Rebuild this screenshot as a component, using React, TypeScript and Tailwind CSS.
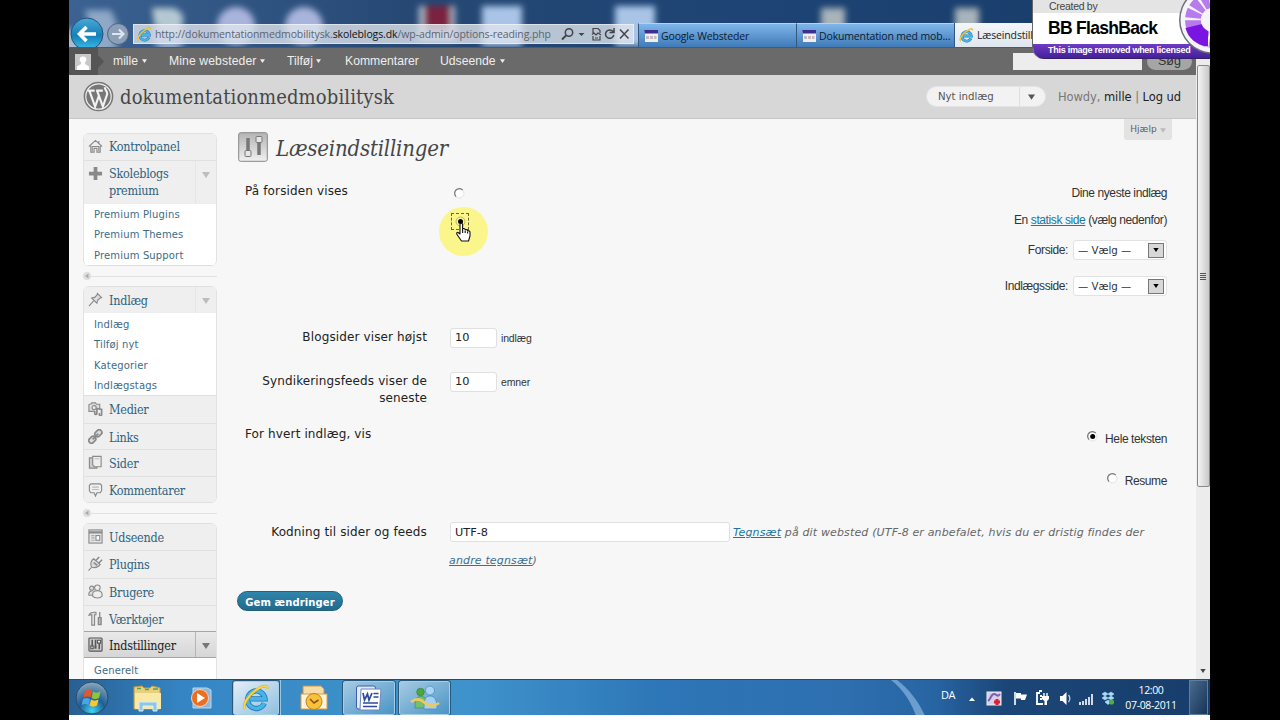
import type { ReactNode } from 'react'
import clsx from 'clsx'

const SERIF = "font-['DejaVu_Serif_Condensed','DejaVu_Serif',serif]"
const VERDANA = "font-['DejaVu_Sans',sans-serif]"
const ARIAL = "font-['Liberation_Sans',sans-serif]"
const SEGOE = "font-['Open_Sans','Noto_Sans',sans-serif]"

type IconName =
  | 'home' | 'plus' | 'pin' | 'media' | 'link' | 'pages' | 'comment'
  | 'appearance' | 'plug' | 'users' | 'tools' | 'settings'

const ICONS: Record<IconName, ReactNode> = {
  home: (
    <>
      <path d="M1 8 8 1.5 15 8M3 7.5V14h3.5v-4h3v4H13V7.5" />
      <path d="M4.5 7.5V13M11.5 7.5V13M11.5 2v3M5 8h6" />
    </>
  ),
  plus: <path d="M8 1v14M1 8h14" strokeWidth="4" stroke="#898989" />,
  pin: <path d="M1 15 6 9.5M4 6.5 9.5 12l1-3.5L14 5.5 10.5 2 7.5 5.5ZM9.5 1l5.5 5.5" fill="#ddd" />,
  media: (
    <>
      <path d="M1 3.5h2l1-1.5h4l1 1.5H12.5v6M1 3.5v7.5H8" fill="#ddd" />
      <circle cx="6.5" cy="7" r="2.2" />
      <path d="M9.5 13V8l5 1v5M9.5 13a1.2 1.2 0 1 1-1.5-1M14.5 14.3a1.2 1.2 0 1 1-1.5-1" strokeWidth="1.8" />
    </>
  ),
  link: (
    <>
      <rect x="7" y="1.8" width="8" height="5.5" rx="2.5" transform="rotate(-45 11 4.5)" strokeWidth="1.8" fill="#ddd" />
      <rect x="0.5" y="8.5" width="8" height="5.5" rx="2.5" transform="rotate(-45 4.8 11.3)" strokeWidth="1.8" fill="#ddd" />
      <path d="m5 11 6-6" strokeWidth="1.8" />
    </>
  ),
  pages: (
    <>
      <path d="M4.5 3H1.5v11h8v-1.5" fill="#ccc" />
      <path d="M5 1.5h9v11H7L5 10.5Z" fill="#eee" />
      <path d="M7 4h5" stroke="#bbb" />
    </>
  ),
  comment: (
    <>
      <path d="M3 2h10l1.5 1.5v6L13 11.5H9.5L8 15 6.5 11.5H3L1.5 9.5v-6Z" fill="#eee" />
      <path d="M4.5 5.5h7M4.5 8h7" stroke="#bbb" />
    </>
  ),
  appearance: (
    <>
      <rect x="1" y="1" width="14" height="14" fill="#e5e5e5" />
      <path d="M1 3.5h14" strokeWidth="2.4" />
      <path d="M3.5 7h3.5M3.5 9.5H7M3.5 12H7" stroke="#aaa" />
      <rect x="8.5" y="7" width="4" height="5" fill="#fff" />
    </>
  ),
  plug: (
    <>
      <path d="m0.5 15.5 3-3M6 3c-3 2-4 6-2 9 4 1 7 0 9-3Z" fill="#ddd" />
      <path d="m8 5 4-4M11 8l4-4M6 7l4 3" strokeWidth="1.6" />
    </>
  ),
  users: (
    <>
      <circle cx="4" cy="4.5" r="2.3" fill="#ddd" />
      <path d="M5 12H1c-.5-3 1-5 4-5" fill="#ddd" />
      <circle cx="10" cy="4" r="3" fill="#eee" />
      <path d="M5 13c-.5-4 1-6 5-6s5.5 2.5 5 6c-2 2.5-8 2.5-10 0Z" fill="#eee" />
    </>
  ),
  tools: (
    <>
      <path d="M1 4.5C2 2 4 1 8.5 1.5v2.5H7V15H4V4Z" fill="#ddd" />
      <path d="M12.5 1v6M11 7h3v7.5h-3Z" fill="#bbb" strokeWidth="1.4" />
    </>
  ),
  settings: (
    <>
      <rect x="1" y="1" width="14" height="14" rx="1" fill="#ccc" />
      <path d="M4.5 3v6M8 3v6M12 7v6" strokeWidth="1.6" />
      <path d="M3 9.5h2.5v3H3ZM10 3.5h3.5v3H10ZM7.5 9.5h1v2.5h-1Z" fill="#eee" />
    </>
  ),
}

function MenuIcon({ name, dark }: { name: IconName; dark?: boolean }) {
  return (
    <svg
      viewBox="0 0 16 16"
      className="h-[15px] w-[15px] shrink-0"
      fill="none"
      stroke={dark ? '#555' : '#8a8a8a'}
      strokeWidth="1.2"
    >
      {ICONS[name]}
    </svg>
  )
}

type MenuItem = {
  icon: IconName
  label: string
  height: string
  arrow?: boolean
  sub?: string[]
  subClass?: string
  current?: boolean
}

const MENU: MenuItem[][] = [
  [
    { icon: 'home', label: 'Kontrolpanel', height: 'h-[27px]' },
    {
      icon: 'plus',
      label: 'Skoleblogs premium',
      height: 'h-[44px]',
      arrow: true,
      sub: ['Premium Plugins', 'Premium Themes', 'Premium Support'],
      subClass: 'h-[62px] pt-px',
    },
  ],
  [
    {
      icon: 'pin',
      label: 'Indlæg',
      height: 'h-[27px]',
      arrow: true,
      sub: ['Indlæg', 'Tilføj nyt', 'Kategorier', 'Indlægstags'],
      subClass: 'h-[82px] pt-[2px]',
    },
    { icon: 'media', label: 'Medier', height: 'h-[28px]' },
    { icon: 'link', label: 'Links', height: 'h-[26px]' },
    { icon: 'pages', label: 'Sider', height: 'h-[27px]' },
    { icon: 'comment', label: 'Kommentarer', height: 'h-[27px]' },
  ],
  [
    { icon: 'appearance', label: 'Udseende', height: 'h-[27px]' },
    { icon: 'plug', label: 'Plugins', height: 'h-[28px]' },
    { icon: 'users', label: 'Brugere', height: 'h-[27px]' },
    { icon: 'tools', label: 'Værktøjer', height: 'h-[26px]' },
    {
      icon: 'settings',
      label: 'Indstillinger',
      height: 'h-[27px]',
      arrow: true,
      current: true,
      sub: ['Generelt'],
      subClass: 'h-[24px] pt-[3px]',
    },
  ],
]

function Triangle({ className }: { className?: string }) {
  return (
    <svg viewBox="0 0 8 6" className={clsx('shrink-0', className)} fill="currentColor">
      <path d="M0 0h8L4 6Z" />
    </svg>
  )
}

function SidebarGroup({ items, first, last }: { items: MenuItem[]; first?: boolean; last?: boolean }) {
  return (
    <div className={clsx('overflow-hidden border-x border-[#e2e2e2]', last ? 'rounded-t-md' : 'rounded-md')}>
      {items.map((item, i) => (
        <div key={item.label}>
          <div
            className={clsx(
              'flex border-t',
              item.height,
              item.current
                ? 'border-y border-[#a5a5a5] bg-gradient-to-b from-[#e9e9e9] to-[#d6d6d6]'
                : 'border-[#e0e0e0] bg-[#efefef]',
              i === items.length - 1 && !item.sub && 'border-b',
            )}
          >
            <div className="flex flex-1 items-start gap-[6px] pl-[4px] pt-[5px]">
              <MenuIcon name={item.icon} dark={item.current} />
              <span
                className={clsx(
                  SERIF,
                  'w-[80px] text-[12.5px] leading-[17px] tracking-[-0.25px]',
                  first && 'mt-[-1px]',
                  item.current ? 'text-[#222]' : 'text-[#2f6380]',
                )}
              >
                {item.label}
              </span>
            </div>
            {item.arrow && (
              <div
                className={clsx(
                  'flex w-[21px] justify-center border-l pt-[11px]',
                  item.current ? 'border-[#b5b5b5] text-[#777]' : 'border-[#e6e6e6] text-[#bdbdbd]',
                )}
              >
                <Triangle className="h-[6px] w-[8px]" />
              </div>
            )}
          </div>
          {item.sub && (
            <div
              className={clsx(
                'flex flex-col overflow-hidden bg-white pl-[10px]',
                item.subClass,
                !last && i === items.length - 1 && 'border-b border-[#dcdcdc]',
              )}
            >
              {item.sub.map((s) => (
                <span
                  key={s}
                  className={clsx(VERDANA, 'h-[20.3px] shrink-0 text-[10px] leading-[20px] tracking-[0.15px] text-[#3d6c88]')}
                >
                  {s}
                </span>
              ))}
            </div>
          )}
        </div>
      ))}
    </div>
  )
}

function SidebarSeparator() {
  return (
    <div className="flex h-[20px] items-center">
      <svg viewBox="0 0 8 8" className="h-[8px] w-[8px]">
        <circle cx="4" cy="4" r="4" fill="#dedede" />
        <path d="M5.5 1.5v5L2 4Z" fill="#aaa" />
      </svg>
      <div className="h-px flex-1 bg-[#e2e2e2]" />
    </div>
  )
}

function IELogo({ className }: { className?: string }) {
  return (
    <svg viewBox="0 0 32 32" className={clsx('shrink-0', className)} fill="none">
      <path d="M25.5 22a10 10 0 1 1 .8-5H9" stroke="#1c77ba" strokeWidth="6" />
      <path d="M25.5 22a10 10 0 1 1 .8-5H9" stroke="#48b4e6" strokeWidth="4.2" />
      <path d="M4 28C-1 25 8 11 19 5c5-3 10-4 10 0" stroke="#d9a91f" strokeWidth="3.2" />
      <path d="M4 28C-1 25 8 11 19 5c5-3 10-4 10 0" stroke="#f7d84b" strokeWidth="2" />
    </svg>
  )
}

function SiteIcon() {
  return (
    <svg viewBox="0 0 14 12" className="h-[12px] w-[14px] shrink-0">
      <path d="M0 0h14v12H1V3Z" fill="#f1eef0" />
      <path d="M0 0h14v3.5H1Z" fill="#3d2f92" />
      <path d="M2 6h3v3H2ZM6 6h3v3H6ZM10 6h2.5v3H10Z" fill="#c9b9c0" />
    </svg>
  )
}

function DesktopBackdrop() {
  return (
    <svg className="absolute inset-0 h-[48px] w-[1141px]" viewBox="0 0 1141 48" preserveAspectRatio="none">
      <defs>
        <filter id="soft" x="-30%" y="-30%" width="160%" height="160%">
          <feGaussianBlur stdDeviation="3" />
        </filter>
        <linearGradient id="sky" x1="0" x2="1" y1="0" y2="0">
          <stop offset="0" stopColor="#3b6292" />
          <stop offset="0.3" stopColor="#264873" />
          <stop offset="0.6" stopColor="#1d4475" />
          <stop offset="1" stopColor="#183c68" />
        </linearGradient>
      </defs>
      <rect width="1141" height="48" fill="url(#sky)" />
      <g filter="url(#soft)">
        <path d="M-6 30h45v24H-6Z" fill="#a9bdd2" />
        <path d="M16 10h26l6 14v26H26Z" fill="#8ea8c6" />
        <path d="M83 8h22l10 9-6 10H86Z" fill="#b9ccd2" />
        <circle cx="100" cy="36" r="16" fill="#8fa6c8" />
        <circle cx="102" cy="20" r="12" fill="#b4c8d4" />
        <circle cx="167" cy="26" r="19" fill="#a9b4dc" />
        <circle cx="235" cy="26" r="19" fill="#a9b4dc" />
        <path d="M350 6h36v34h-36Z" fill="#b8bfd0" />
        <path d="M355 6h27v28h-27Z" fill="#7b2440" />
        <path d="M413 6h40v40h-40Z" fill="#a9c4e6" />
        <path d="M546 6h40v40h-40Z" fill="#a9c4e6" />
        <path d="M752 8h24v30h-24Z" fill="#a8b3ba" />
        <path d="M886 8h24v30h-24Z" fill="#a8b3ba" />
      </g>
    </svg>
  )
}

function BrowserChrome() {
  const tab = 'flex h-[24px] items-center gap-[3px] text-[10.5px] tracking-[-0.15px]'
  const idleTab = 'w-[158px] border-l border-t border-[#33567e] border-t-[#b5d2ee] bg-gradient-to-b from-[#7fb6ea] to-[#3f7bb8] pl-[5px] text-[#0c1c30]'

  return (
    <div className="relative h-[48px] overflow-hidden border-b border-[#4a5a6c]">
      <DesktopBackdrop />
      <div className={clsx(SEGOE, 'relative flex h-[47px] items-end')}>
        <svg viewBox="0 0 64 34" className="mb-[-1px] h-[34px] w-[64px] shrink-0">
          <defs>
            <linearGradient id="back" x1="0" x2="0" y1="0" y2="1">
              <stop offset="0" stopColor="#4aa9d6" />
              <stop offset="0.55" stopColor="#1580b9" />
              <stop offset="1" stopColor="#3fc0ea" />
            </linearGradient>
          </defs>
          <circle cx="18" cy="20" r="16" fill="url(#back)" stroke="#2b5273" />
          <path d="M27 20H11M17.5 13 10.5 20l7 7" stroke="#fff" strokeWidth="3.6" fill="none" />
          <circle cx="49" cy="20" r="10.5" fill="#8c9fb8" stroke="#52657f" />
          <path d="M43 20h11M50 15.5l4.5 4.5-4.5 4.5" stroke="#dde5ee" strokeWidth="2.2" fill="none" />
        </svg>
        <div className="mb-[3px] flex h-[20px] w-[501px] items-center border border-white/50 bg-[#dde3ec]/80 pl-[3px] text-[#333]">
          <IELogo className="h-[15px] w-[15px]" />
          <span className="ml-[3px] mt-[1px] w-[402px] shrink-0 whitespace-nowrap text-[10.5px] tracking-[-0.1px] text-[#5c6470]">
            http://dokumentationmedmobilitysk.<span className="text-[#111]">skoleblogs.dk</span>/wp-admin/options-reading.php
          </span>
          <svg viewBox="0 0 72 14" className="ml-[4px] h-[14px] w-[72px] shrink-0" fill="none" stroke="#444" strokeWidth="1.5">
            <circle cx="8" cy="5.5" r="3.7" />
            <path d="M5 8.5 1 12.5" strokeWidth="2" />
            <path d="M17.5 6h6L20.5 9Z" fill="#444" stroke="none" />
            <path d="M32 6V1.5h5l2 2V6M32 9v4h7V9M31 7.5l2-1.5 2 2 2-2 3 2M34 11h3" strokeWidth="1.2" />
            <path d="M52 4.5a4.2 4.2 0 1 0 .8 3.5M53 1v4.5h-4.5" />
            <path d="m59 2.5 8.5 9M67.5 2.5 59 11.5" />
          </svg>
        </div>
        <div className={clsx(tab, idleTab, 'ml-[4px]')}>
          <SiteIcon />
          <span className="mt-[2px]">Google Websteder</span>
        </div>
        <div className={clsx(tab, idleTab)}>
          <SiteIcon />
          <span className="mt-[2px] whitespace-nowrap">Dokumentation med mob...</span>
        </div>
        <div className={clsx(tab, 'w-[90px] border-l border-[#33567e] bg-gradient-to-b from-[#f4f6f9] to-[#dfe6ee] pl-[4px] text-[#222]')}>
          <IELogo className="h-[15px] w-[15px]" />
          <span className="mt-[2px] whitespace-nowrap">Læseindstillinger</span>
        </div>
      </div>
    </div>
  )
}

function FlashBackBadge() {
  return (
    <div className={clsx(ARIAL, 'absolute right-0 top-0 h-[59px] w-[178px] overflow-hidden rounded-bl-[12px] border-l border-[#666] bg-white')}>
      <div className="flex h-[13px] items-center bg-[#e4e4e4] pl-[16px] text-[10.5px] tracking-[-0.3px] text-[#444]">Created by</div>
      <div className="flex h-[31px] items-center pl-[15px] text-[17.5px] font-bold tracking-[-0.7px] text-black">BB FlashBack</div>
      <div className="flex h-[15px] items-center border-b border-[#37206a] bg-gradient-to-b from-[#6f3cc4] to-[#43209a] pl-[15px] text-[9px] font-bold tracking-[-0.27px] text-white">
        This image removed when licensed
      </div>
      <svg viewBox="0 0 34 59" className="absolute right-0 top-0 h-[59px] w-[34px]">
        <circle cx="37" cy="20" r="34" fill="#6f6f78" />
        <circle cx="37" cy="20" r="32.5" fill="#f6f4fa" />
        <circle cx="37" cy="20" r="20" fill="none" stroke="#b77bee" strokeWidth="16" strokeDasharray="7 2.2" />
        <path d="M9.5 28 26 24l6 5v17.5C20 45 12 38 9.5 28Z" fill="#7a14e0" />
        <circle cx="37" cy="20" r="12" fill="#f6f4fa" />
      </svg>
    </div>
  )
}

function AdminBar() {
  return (
    <div className={clsx(ARIAL, 'flex h-[27px] items-center bg-[#6a6a6a] text-[12.2px] text-[#eee]')}>
      <div className="flex h-full w-[29px] items-center bg-[#555] pl-[6px]">
        <svg viewBox="0 0 16 16" className="h-[16px] w-[16px]">
          <rect width="16" height="16" fill="#c8c8c8" />
          <path d="M8 2.5a3 3 0 0 1 2 5.5v2l4 2.5V16H2v-3.5L6 10V8a3 3 0 0 1 2-5.5Z" fill="#fff" />
        </svg>
      </div>
      <svg viewBox="0 0 6 27" className="h-[27px] w-[6px]"><path d="M0 7 6 13.500 0 20Z" fill="#555" /></svg>
      <div className="ml-[9px] flex w-[56px] items-center gap-[4px]">mille <Triangle className="h-[4px] w-[5px]" /></div>
      <div className="flex w-[118px] items-center gap-[4px]">
        <span className="tracking-[0.1px]">Mine websteder</span> <Triangle className="h-[4px] w-[5px]" />
      </div>
      <div className="flex w-[58px] items-center gap-[3px]">Tilføj <Triangle className="h-[4px] w-[5px]" /></div>
      <div className="w-[95px]">Kommentarer</div>
      <div className="flex items-center gap-[4px]">Udseende <Triangle className="h-[4px] w-[5px]" /></div>
      <div className="ml-auto mr-[4px] flex items-center gap-[5px]">
        <div className="h-[17px] w-[129px] bg-[#ededed]" />
        <div className="flex h-[17px] w-[45px] items-center justify-center rounded-full bg-[#a5a5a5] text-[12.5px] text-[#333]">Søg</div>
      </div>
    </div>
  )
}

function SiteHeader() {
  return (
    <div className="flex h-[44px] items-center border-b border-[#c6c6c6] bg-[#d7d7d7] pl-[14px] pr-[15px]">
      <svg viewBox="0 0 32 32" className="h-[31px] w-[31px]">
        <circle cx="16" cy="16" r="14.5" fill="#f2f2f2" stroke="#777" strokeWidth="1.6" />
        <circle cx="16" cy="16" r="12.5" fill="#777" />
        <path
          d="M5 10h7M13.5 10h7M6.5 10l6 16.5 4-11.5M14.5 10l6 16.5 4.5-13c.5-3-2.5-4-2.5-7"
          fill="none"
          stroke="#f2f2f2"
          strokeWidth="2.2"
        />
      </svg>
      <h1 className={clsx(SERIF, 'ml-[6px] text-[20px] tracking-[0.12px] text-[#464646]')}>dokumentationmedmobilitysk</h1>
      <div className={clsx(VERDANA, 'ml-auto flex items-center text-[11.5px]')}>
        <div className="flex h-[21px] w-[120px] items-center rounded-full border border-[#e4e4e4] bg-[#f2f2f2] text-[10.2px] text-[#555]">
          <span className="flex-1 pl-[11px]">Nyt indlæg</span>
          <span className="flex h-full w-[26px] items-center border-l border-[#ddd] pl-[8px] text-[#555]">
            <Triangle className="h-[6px] w-[7px]" />
          </span>
        </div>
        <span className="ml-[12px] mt-[2px] whitespace-pre tracking-[-0.06px] text-[#777]">
          Howdy, <span className="text-[#222]">mille</span> | <span className="text-[#222]">Log ud</span>
        </span>
      </div>
    </div>
  )
}

function Radio({ checked }: { checked?: boolean }) {
  return (
    <svg viewBox="0 0 11 11" className="h-[11px] w-[11px] shrink-0" fill="none">
      <circle cx="5.5" cy="5.5" r="4.5" fill="#fff" stroke="#e2e2e2" />
      <path d="M2 8.7A4.5 4.5 0 0 1 8.7 2" stroke="#777" strokeWidth="1.2" />
      {checked && <circle cx="5.7" cy="5.5" r="2.5" fill="#000" />}
    </svg>
  )
}

function PageSelect() {
  return (
    <div className={clsx(VERDANA, 'ml-[5px] flex h-[20px] w-[94px] items-center justify-between rounded-[3px] border border-[#e2e2e2] bg-white pl-[4px] pr-[2px] text-[10.2px] tracking-[0px]')}>
      <span className="mt-[2px]">— Vælg —</span>
      <span className="flex h-[15px] w-[16px] items-center justify-center border border-[#777] bg-[#d8d8d8] text-black">
        <Triangle className="h-[4px] w-[6px]" />
      </span>
    </div>
  )
}

function Pointer() {
  return (
    <div className="absolute left-[-12px] top-[-1px] h-[49px] w-[49px]">
      <div className="h-[49px] w-[49px] rounded-full bg-[#faf68c]" />
      <div className="absolute left-[12px] top-[6px] flex h-[17px] w-[18px] items-center justify-center border border-dashed border-[#6b6835]">
        <svg viewBox="0 0 11 11" className="h-[11px] w-[11px]" fill="none">
          <circle cx="5.5" cy="5.5" r="4.5" stroke="#c2b84c" />
          <circle cx="5.5" cy="5.5" r="2.5" fill="#000" />
        </svg>
      </div>
      <svg viewBox="0 0 16 20" className="absolute left-[16px] top-[15px] h-[20px] w-[16px]" fill="#fff" stroke="#111" strokeWidth="1.1" strokeLinejoin="round">
        <path d="M5 12V2.5a1.3 1.3 0 0 1 2.6 0V8l.2-1.3c1.3-.5 2.3 0 2.4 1 1.2-.5 2.2 0 2.4 1 1.3-.3 2.4.4 2.4 1.8V14l-1.5 5H6.5L2 12.5c-1-1.5.3-2.6 1.5-1.7Z" />
        <path d="M7.6 8v3M10.2 8.5V11M12.6 9.5V11.5" />
      </svg>
    </div>
  )
}

function SettingsPage() {
  const labelText = clsx(VERDANA, 'w-[189px] shrink-0 text-[12px] leading-[17px] tracking-[0.13px] text-[#222]')
  const label = clsx(labelText, 'text-right')
  const side = clsx(ARIAL, 'flex items-center text-[12px] tracking-[-0.4px] text-[#333]')
  const numberField = clsx(VERDANA, 'ml-[23px] flex h-[20px] w-[47px] items-center rounded-[3px] border border-[#e0e0e0] bg-white pl-[4px] pt-[1px] text-[11.3px] text-[#222]')

  return (
    <div className="flex flex-1 flex-col pl-[21px] pr-[29px]">
      <div className="mr-[-5px] flex h-[58px]">
        <svg viewBox="0 0 30 30" className="mt-[13px] h-[30px] w-[30px]">
          <defs>
            <linearGradient id="iconBg" x1="0" x2="0" y1="0" y2="1">
              <stop offset="0" stopColor="#b4b4b4" />
              <stop offset="1" stopColor="#f0f0f0" />
            </linearGradient>
          </defs>
          <rect x="0.7" y="0.7" width="28.6" height="28.6" rx="2" fill="url(#iconBg)" stroke="#888" />
          <path d="M10 6v13M21 9v14" stroke="#777" strokeWidth="3.5" />
          <rect x="7" y="18.5" width="6" height="6" rx="1" fill="#e6e6e6" stroke="#777" />
          <rect x="18" y="4.5" width="6" height="6" rx="1" fill="#e6e6e6" stroke="#777" />
        </svg>
        <h2 className={clsx(SERIF, 'ml-[8px] mt-[14px] text-[22px] italic leading-[32px] tracking-[-0.2px] text-[#464646]')}>Læseindstillinger</h2>
        <div className={clsx(VERDANA, 'ml-auto flex h-[21px] w-[48px] items-center justify-center gap-[3px] rounded-b-[3px] bg-[#e3e3e3] pt-[1px] text-[9px] text-[#606060]')}>
          Hjælp <Triangle className="h-[5px] w-[6px] text-[#bbb]" />
        </div>
      </div>

      <div className="flex h-[31px] items-center">
        <span className={clsx(labelText, 'mt-[-2px] pl-[7px]')}>På forsiden vises</span>
        <span className="ml-[27px] mt-[1px]"><Radio /></span>
        <span className={clsx(side, 'ml-auto')}>Dine nyeste indlæg</span>
      </div>
      <div className="flex h-[24px] items-center">
        <div className="relative ml-[213px] h-[24px] w-[18px]"><Pointer /></div>
        <span className={clsx(side, 'ml-auto whitespace-pre')}>
          En <a className="text-[#21759b] underline">statisk side</a> (vælg nedenfor)
        </span>
      </div>
      <div className={clsx(side, 'h-[36px] justify-end')}>Forside: <PageSelect /></div>
      <div className={clsx(side, 'h-[36px] justify-end')}>Indlægsside: <PageSelect /></div>

      <div className="mt-[14px] flex h-[39px] items-center">
        <span className={label}>Blogsider viser højst</span>
        <span className={numberField}>10</span>
        <span className={clsx(ARIAL, 'ml-[4px] mt-[2px] text-[10.5px] tracking-[-0.15px] text-[#333]')}>indlæg</span>
      </div>
      <div className="mt-[15px] flex h-[46px]">
        <span className={clsx(label, 'pl-[10px] pt-[1px]')}>
          Syndikeringsfeeds viser de
          <br />
          seneste
        </span>
        <span className={numberField}>10</span>
        <span className={clsx(ARIAL, 'ml-[4px] text-[10.5px] leading-[21px] tracking-[-0.15px] text-[#333]')}>emner</span>
      </div>

      <div className="flex h-[42px] justify-between">
        <span className={clsx(labelText, 'pl-[7px] pt-[8px]')}>For hvert indlæg, vis</span>
        <span className={clsx(side, 'h-[42px] gap-[7px]')}>
          <span className="mb-[6px]"><Radio checked /></span>
          Hele teksten
        </span>
      </div>
      <div className="flex h-[42px] justify-end">
        <span className={clsx(side, 'gap-[7px]')}>
          <span className="mb-[6px]"><Radio /></span>
          Resume
        </span>
      </div>

      <div className="mt-[15px] flex h-[30px] items-center">
        <span className={label}>Kodning til sider og feeds</span>
        <span className={clsx(VERDANA, 'ml-[23px] flex h-[20px] w-[280px] shrink-0 items-center rounded-[3px] border border-[#e0e0e0] bg-white pl-[4px] pt-[2px] text-[11.3px] text-[#222]')}>UTF-8</span>
        <span className={clsx(VERDANA, 'ml-[3px] mt-[2px] whitespace-nowrap text-[11px] italic tracking-[0.15px] text-[#666]')}>
          <a className="text-[#21759b] underline">Tegnsæt</a> på dit websted (UTF-8 er anbefalet, hvis du er dristig findes der
        </span>
      </div>
      <div className={clsx(VERDANA, 'flex h-[28px] items-center pl-[211px] pt-[1px] text-[11px] italic tracking-[0.15px] text-[#666]')}>
        <a className="text-[#3c6f92] underline">andre tegnsæt</a>)
      </div>
      <div className={clsx(VERDANA, 'ml-[-1px] mt-[16px] flex h-[20px] w-[106px] items-center justify-center rounded-full border border-[#25627f] bg-gradient-to-b from-[#2f86ab] to-[#22698b] pt-[2px] text-[10px] font-bold tracking-[0.12px] text-white')}>
        Gem ændringer
      </div>
    </div>
  )
}

function Scrollbar() {
  return (
    <div className="flex w-[14px] flex-col items-center bg-[#ececec] pt-[17px]">
      <div className="flex h-[422px] w-[13px] flex-col items-center justify-center gap-[1px] rounded-[2px] border border-[#888] bg-gradient-to-r from-[#f4f4f4] to-[#c9c9c9]">
        <div className="h-px w-[6px] bg-[#555]" />
        <div className="h-px w-[6px] bg-[#555]" />
        <div className="h-px w-[6px] bg-[#555]" />
        <div className="h-px w-[6px] bg-[#555]" />
      </div>
      <Triangle className="mb-[6px] mt-auto h-[4px] w-[6px] text-[#444]" />
    </div>
  )
}

function StartOrb() {
  return (
    <svg viewBox="0 0 34 34" className="h-[34px] w-[34px]">
      <defs>
        <radialGradient id="orb" cx="0.5" cy="0.9" r="0.9">
          <stop offset="0" stopColor="#41d3f2" />
          <stop offset="0.45" stopColor="#1b5f96" />
          <stop offset="1" stopColor="#8fa9be" />
        </radialGradient>
      </defs>
      <circle cx="17" cy="17" r="16" fill="url(#orb)" stroke="#2a4a66" />
      <path d="M10 10c3-2 5-1.5 7 0l-1.5 6.5c-2-1.5-4-1.5-7 0Z" fill="#e8552a" />
      <path d="M18 10.5c2 1.5 4.5 1.5 7.5 0L24 17c-3 1.5-5 1.5-7.5 0Z" fill="#8cc63e" />
      <path d="M8 18c3-1.5 5-1.5 7 0L13.5 24c-2-1.5-4-1.5-7 0Z" fill="#4aa5e8" />
      <path d="M16 18.5c2.5 1.5 4.5 1.5 7.5 0L22 24.5c-3 1.5-5 1.5-7.5 0Z" fill="#fbc72e" />
    </svg>
  )
}

function TaskButton({ children, className }: { children: ReactNode; className?: string }) {
  return (
    <div className={clsx('flex h-[34px] items-center justify-center rounded-[2px] border border-[#a5cfe8] bg-gradient-to-br outline outline-[#2b5878]', className)}>
      {children}
    </div>
  )
}

function Taskbar() {
  return (
    <div className="relative flex h-[36px] items-center overflow-hidden border-t border-[#2b4a66] bg-[linear-gradient(90deg,#285f93_0%,#3585c4_10%,#3d93cb_28%,#3f93cc_35%,#2d76b7_52%,#2e6fb0_68%,#2764a2_76%,#1b4677_82%,#173d6b_100%)]">
      <svg viewBox="0 0 80 36" className="absolute left-[804px] top-0 h-[36px] w-[80px]">
        <path d="M24 0c12 9 22 22 28 36h-9C39 24 31 10 18 0Z" fill="#8fbbe3" opacity="0.65" />
      </svg>
      <div className="ml-[6px]"><StartOrb /></div>
      <svg viewBox="0 0 30 28" className="ml-[24px] h-[28px] w-[30px]">
        <path d="M1 3 9 2l2 2h6l2-2 8 2v21H1Z" fill="#e9cf7c" stroke="#c29b40" />
        <path d="M4 4.5h4M12 5.5h4M20 5h5" stroke="#55a35c" strokeWidth="1.5" />
        <path d="M2 9h26v16H2Z" fill="#f8e9a6" />
        <path d="M6 27v-9h18v9h-4v-5H10v5Z" fill="#8cc7e8" stroke="#d9eef8" />
      </svg>
      <svg viewBox="0 0 24 24" className="ml-[26px] h-[24px] w-[24px]">
        <path d="M4 2h14l4 2v18H4Z" fill="#8db8dc" stroke="#b8d7ee" />
        <circle cx="11" cy="12" r="8.5" fill="#e96f22" stroke="#f7d2b3" />
        <path d="m8 7 8 5-8 5Z" fill="#fff" />
      </svg>
      <TaskButton className="ml-[20px] w-[46px] from-[#e3eef7] to-[#8fbfdf]"><IELogo className="h-[28px] w-[28px]" /></TaskButton>
      <div className="ml-[1px] h-full w-px bg-[#9cc7e2]" />
      <svg viewBox="0 0 28 28" className="ml-[19px] h-[28px] w-[28px]">
        <path d="M3 2h18l3 3v15H3Z" fill="#f6dda8" stroke="#d98e3a" />
        <path d="M1 10h26v15H1Z" fill="#fff4dc" stroke="#e09b46" />
        <circle cx="14" cy="17.5" r="8" fill="#f7c13a" stroke="#c67f1a" />
        <path d="m10 15 4 4 4.5-3" stroke="#8a5510" strokeWidth="1.6" fill="none" />
      </svg>
      <TaskButton className="ml-[15px] w-[52px] from-[#a5cae3] to-[#4795c6]">
        <svg viewBox="0 0 26 28" className="h-[28px] w-[26px]">
          <rect x="0.5" y="2" width="19" height="23" rx="2" fill="#dfe9f8" stroke="#3c5fa8" />
          <path d="M5 5h20l-1.5 21H4Z" fill="#fff" stroke="#6f87b8" />
          <path d="m7 9 1.5 7 3-6 1.5 6 3-7" stroke="#2b4aa0" strokeWidth="1.7" fill="none" />
          <path d="M17.5 9.5h5M17.5 13h5M7 19h15M7 22.5h14" stroke="#2b4aa0" strokeWidth="1.5" />
        </svg>
      </TaskButton>
      <TaskButton className="ml-[4px] w-[51px] from-[#a5cae3] to-[#4795c6]">
        <svg viewBox="0 0 30 26" className="h-[26px] w-[30px]">
          <circle cx="10.5" cy="7" r="3.8" fill="#4ba83f" stroke="#2e7d32" strokeWidth="0.6" />
          <path d="M5 23c0-8 1-11.5 6-11.5s6 3.5 6 11.5Z" fill="#74c06a" stroke="#3a8a3c" strokeWidth="0.6" />
          <circle cx="20" cy="5.5" r="4.5" fill="#a9d4f4" stroke="#4c8cc4" strokeWidth="0.8" />
          <path d="M14 24c0-9 1-13 6-13s7 4 7 13Z" fill="#a5d0f0" stroke="#4c8cc4" strokeWidth="0.8" />
          <path d="M1 17c6-5 11-2 14 1s8 4 14 0" stroke="#f0c95e" strokeWidth="2.6" fill="none" />
        </svg>
      </TaskButton>

      <div className={clsx(SEGOE, 'ml-auto flex h-full items-center text-[11px] text-white')}>
        <span className="mb-[5px] w-[28px] tracking-[-0.5px]">DA</span>
        <svg viewBox="0 0 150 20" className="h-[20px] w-[150px] shrink-0">
          <path d="M0 13h6L3 9.5Z" fill="#fff" />
          <rect x="18" y="4" width="14" height="13" fill="#d9cfe6" stroke="#eee" />
          <path d="M19 13c3-2 3-7 6-7s3 4 6 0" stroke="#7c5fb0" strokeWidth="2" fill="none" />
          <path d="M28 11v6M25 14h6" stroke="#dc1f35" strokeWidth="3" />
          <path d="M46 4v13" stroke="#fff" strokeWidth="1.6" />
          <path d="M47 5h5v1.5h6L56 12h-4v-1.5h-5Z" fill="#fff" />
          <path d="M71 5h-3v11h6M70 3h3M71 8h2M71 11h2" stroke="#fff" strokeWidth="1.8" fill="none" />
          <path d="M75 5v3M78 5v3" stroke="#fff" strokeWidth="1.4" />
          <path d="M73 8h7v3l-2 2v4h-2.5v-4L73 11Z" fill="#fff" />
          <path d="M91 8h2.5l4-4v13l-4-4H91Z" fill="#fff" />
          <path d="M99.500 7c1.500 2 1.500 5 0 7" stroke="#b8cbe0" strokeWidth="1.3" fill="none" />
          <path d="M111 17v-3M114 17v-4M117 17v-6M120 17V9M123 17V6" stroke="#fff" strokeWidth="1.6" />
          <path d="m136 4 3 2-3 2-3-2ZM142 4l3 2-3 2-3-2ZM136 8l3 2-3 2-3-2ZM142 8l3 2-3 2-3-2ZM139 12l3 2-3 2.5-3-2.5Z" fill="#a9dcf8" stroke="#a9dcf8" strokeWidth="0.6" />
          <circle cx="142.5" cy="14" r="2.6" fill="#4fae4a" />
        </svg>
        <div className="ml-[3px] w-[58px] whitespace-nowrap pt-[1px] text-center text-[10.5px] leading-[15px] tracking-[-0.35px]">
          <div>12:00</div>
          <div>07-08-2011</div>
        </div>
        <div className="ml-[9px] mr-[2px] h-full w-[19px] border border-[#5d7f9f] bg-gradient-to-br from-[#4b6c8e] to-[#163457]" />
      </div>
    </div>
  )
}

export default function App() {
  return (
    <div className="h-[720px] w-[1280px] overflow-hidden bg-black px-[69px]">
      <div className="relative flex h-[720px] w-[1141px] flex-col bg-white">
        <BrowserChrome />
        <div className="flex h-[631px]">
          <div className="flex w-[1127px] flex-col">
            <AdminBar />
            <SiteHeader />
            <div className="flex min-h-0 flex-1 overflow-hidden bg-[#f7f7f7]">
              <div className="w-[148px] shrink-0 pl-[14px] pt-[14px]">
                <SidebarGroup items={MENU[0]} first />
                <SidebarSeparator />
                <SidebarGroup items={MENU[1]} />
                <SidebarSeparator />
                <SidebarGroup items={MENU[2]} last />
              </div>
              <SettingsPage />
            </div>
          </div>
          <Scrollbar />
        </div>
        <Taskbar />
        <FlashBackBadge />
      </div>
    </div>
  )
}
